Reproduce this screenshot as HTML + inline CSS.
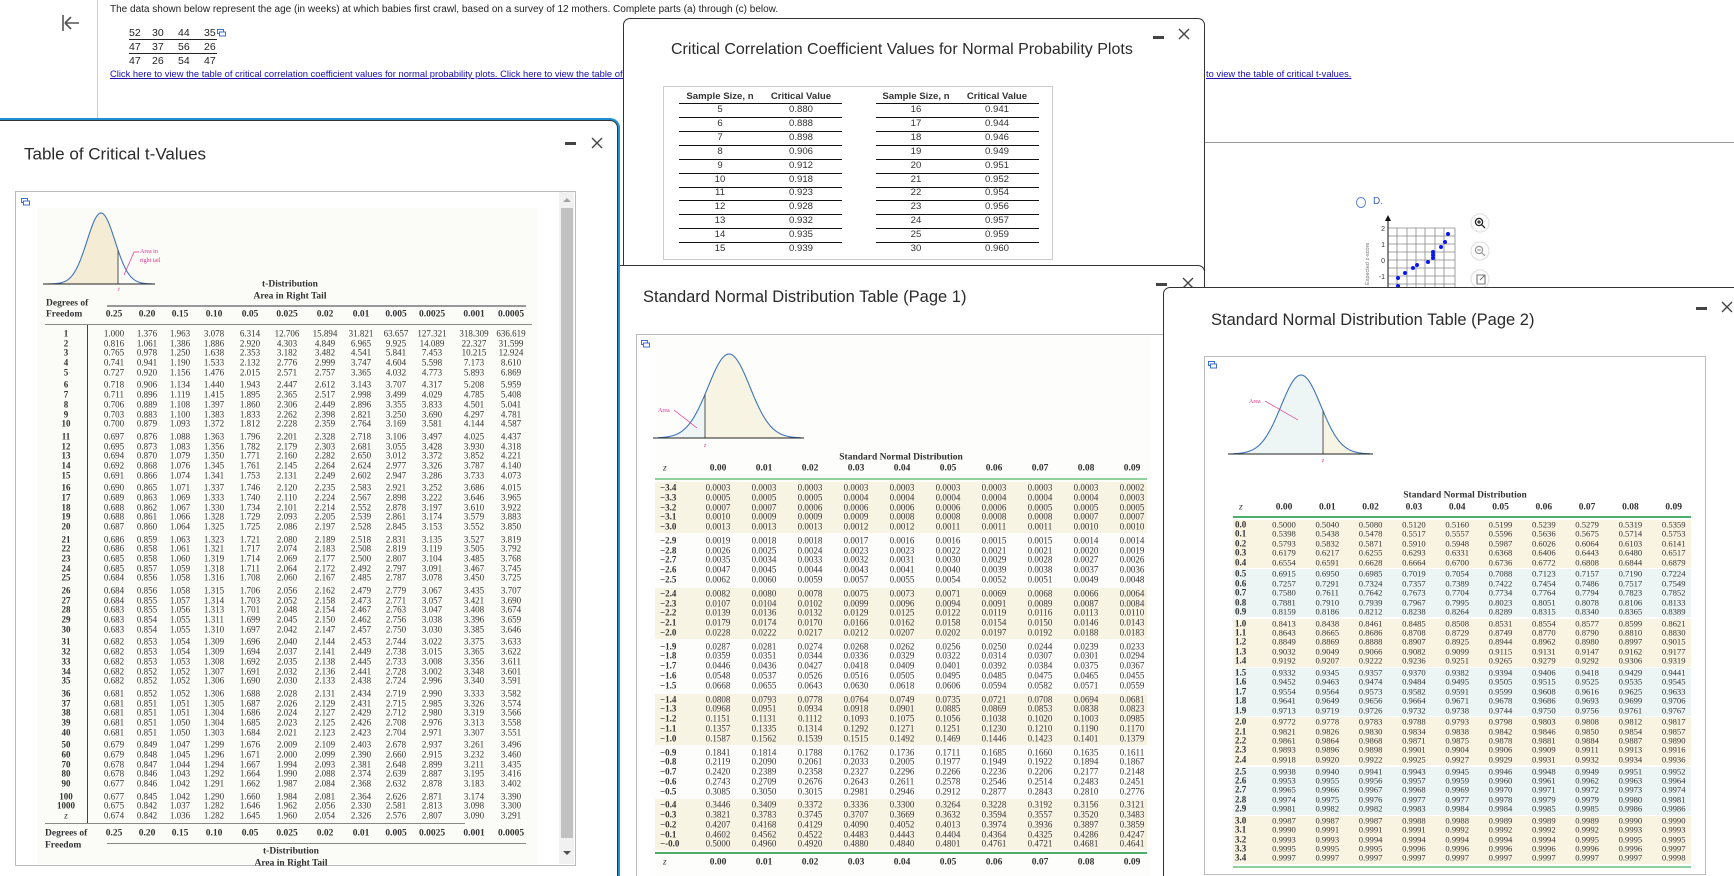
<!DOCTYPE html>
<html><head><meta charset="utf-8">
<style>
html,body{margin:0;padding:0;width:1734px;height:876px;overflow:hidden}
body{position:relative;background:#fff;font-family:"Liberation Sans",Arial,sans-serif;color:#222}
.abs{position:absolute}
.win{position:absolute;left:0;top:0;width:1734px;height:876px;overflow:hidden;pointer-events:none}
.t{position:absolute;transform:translate(-50%,-50%);white-space:nowrap;line-height:1}
.l{position:absolute;transform:translate(0,-50%);white-space:nowrap;line-height:1}
.ser{font-family:"Liberation Serif","Times New Roman",serif;font-size:9px;color:#333}
.b{font-weight:bold}
.ttl{position:absolute;font-size:16.5px;color:#2b2b2b;white-space:nowrap;line-height:1;transform:translate(0,-50%)}
.mn{position:absolute;width:11px;height:3px;background:#444}
.link{color:#1a0dab;text-decoration:underline;font-size:9.4px;position:absolute;white-space:nowrap}
.cc{font-size:9.6px;color:#333}
</style></head><body>

<!-- background page -->
<div class="abs" style="left:97px;top:0;width:1px;height:120px;background:#ccc"></div>
<svg class="abs" style="left:61px;top:13px" width="20" height="20" viewBox="0 0 20 20"><path d="M2 2V18M4 10H18M4 10L10 4M4 10L10 16" stroke="#555" stroke-width="1.6" fill="none"/></svg>
<div class="abs" style="left:110px;top:4px;font-size:10px;white-space:nowrap;color:#222">The data shown below represent the age (in weeks) at which babies first crawl, based on a survey of 12 mothers. Complete parts (a) through (c) below.</div>
<div class="abs" style="left:129px;top:26px;font-size:10.5px;line-height:14px;color:#222">
<div style="position:relative;width:90px;height:14px"><span class="abs" style="left:0">52</span><span class="abs" style="left:23px">30</span><span class="abs" style="left:49px">44</span><span class="abs" style="left:75px">35</span></div>
<div style="position:relative;width:88px;height:14px;border-top:1px solid #222;margin-top:-1px"><span class="abs" style="left:0">47</span><span class="abs" style="left:23px">37</span><span class="abs" style="left:49px">56</span><span class="abs" style="left:75px">26</span></div>
<div style="position:relative;width:88px;height:14px;border-top:1px solid #222;margin-top:-1px"><span class="abs" style="left:0">47</span><span class="abs" style="left:23px">26</span><span class="abs" style="left:49px">54</span><span class="abs" style="left:75px">47</span></div>
</div>
<svg class="abs" style="left:217px;top:29px" width="9" height="8"><rect x="0.5" y="0.5" width="6" height="4" fill="#fff" stroke="#3b6fd0"/><rect x="2.5" y="3" width="6" height="4" fill="#fff" stroke="#3b6fd0"/></svg>
<div class="link" style="left:110px;top:68px">Click here to view the table of critical correlation coefficient values for normal probability plots. Click here to view the table of critical t-values.</div>
<div class="link" style="left:1206px;top:68px;background:#fff">to view the table of critical t-values.</div>
<div class="abs" style="left:1204px;top:142px;width:530px;height:1px;background:#999"></div>
<div class="abs" style="left:1356px;top:197px;width:8px;height:9px;border:1px solid #5b86d6;border-radius:50%"></div>
<div class="abs" style="left:1373px;top:196px;font-size:10px;color:#3a5fc8">D.</div>
<svg class="abs" style="left:1360px;top:210px" width="140" height="80" viewBox="1360 210 140 80">
 <g stroke="#888" stroke-width="0.8">
  <line x1="1397" y1="228" x2="1397" y2="290"/><line x1="1407" y1="228" x2="1407" y2="290"/><line x1="1416" y1="228" x2="1416" y2="290"/><line x1="1425" y1="228" x2="1425" y2="290"/><line x1="1435" y1="228" x2="1435" y2="290"/><line x1="1444" y1="228" x2="1444" y2="290"/><line x1="1455" y1="228" x2="1455" y2="290"/>
  <line x1="1388" y1="228" x2="1455" y2="228"/><line x1="1388" y1="236" x2="1455" y2="236"/><line x1="1388" y1="244" x2="1455" y2="244"/><line x1="1388" y1="252" x2="1455" y2="252"/><line x1="1388" y1="260" x2="1455" y2="260"/><line x1="1388" y1="268" x2="1455" y2="268"/><line x1="1388" y1="276" x2="1455" y2="276"/><line x1="1388" y1="284" x2="1455" y2="284"/>
 </g>
 <line x1="1388" y1="216" x2="1388" y2="290" stroke="#111" stroke-width="1"/>
 <path d="M1385 221L1388 215L1391 221Z" fill="#111"/>
 <g fill="#0a18f0"><circle cx="1398" cy="278" r="2"/><circle cx="1398" cy="286" r="2"/><circle cx="1405" cy="273" r="2"/><circle cx="1413" cy="268" r="2"/><circle cx="1417" cy="265" r="2"/><circle cx="1428" cy="262" r="2"/><circle cx="1433" cy="252" r="2"/><circle cx="1433" cy="255" r="2"/><circle cx="1433" cy="258" r="2"/><circle cx="1441" cy="247" r="2"/><circle cx="1445" cy="242" r="2"/><circle cx="1448" cy="234" r="2"/></g>
 <g font-size="7" fill="#333" font-family="Liberation Sans" text-anchor="end"><text x="1385" y="231">2</text><text x="1385" y="247">1</text><text x="1385" y="263">0</text><text x="1385" y="279">-1</text></g>
 <text x="1369" y="285" font-size="5.5" fill="#777" font-family="Liberation Sans" transform="rotate(-90 1369 285)">Expected z-score</text>
</svg>
<svg class="abs" style="left:1468px;top:211px" width="26" height="80" viewBox="0 0 26 80">
 <g fill="#fff" stroke="#ddd"><circle cx="12" cy="12" r="9"/><circle cx="12" cy="40" r="9"/><circle cx="12" cy="68" r="9"/></g>
 <g fill="none" stroke="#222" stroke-width="1.3"><circle cx="11" cy="11" r="3.6"/><path d="M13.6 13.6L17 17M9.2 11H12.8M11 9.2V12.8"/></g>
 <g fill="none" stroke="#999" stroke-width="1.2"><circle cx="11" cy="39" r="3.6"/><path d="M13.6 41.6L17 45M9.2 39H12.8"/></g>
 <g fill="none" stroke="#777" stroke-width="1.1"><path d="M14 64H9V73H17V68M13 64H17V68M17 64L12 69"/></g>
</svg>

<!-- Correlation window -->
<div class="win" id="wc">
 <div class="abs" style="left:623px;top:18px;height:260px;background:#fff;border:1px solid #333;border-radius:7px 7px 0 0;box-sizing:border-box;width:582px"></div>
 <div class="ttl" style="left:671px;top:50px;font-size:16px">Critical Correlation Coefficient Values for Normal Probability Plots</div>
 <div class="mn" style="left:1153px;top:36px"></div>
 <svg class="abs" style="left:1178px;top:28px" width="12" height="12"><path d="M1 1L11 11M11 1L1 11" stroke="#444" stroke-width="1.4"/></svg>
 <div class="abs" style="left:663px;top:86px;width:390px;height:174px;border:1px solid #ccc;box-sizing:border-box"></div>
 <div id="cct"></div>
</div>

<!-- Page 1 window -->
<div class="win" id="w1">
 <div class="abs" style="left:560px;top:265px;width:645px;height:640px;background:#fff;border:1px solid #333;border-radius:0 7px 0 0;box-sizing:border-box"></div>
 <div class="ttl" style="left:643px;top:297px">Standard Normal Distribution Table (Page 1)</div>
 <div class="mn" style="left:1156px;top:283px"></div>
 <svg class="abs" style="left:1182px;top:277px" width="12" height="12"><path d="M1 1L11 11M11 1L1 11" stroke="#444" stroke-width="1.4"/></svg>
 <div class="abs" style="left:636px;top:334px;width:600px;height:560px;border:1px solid #bbb;box-sizing:border-box"></div>
 <div class="abs" style="left:651px;top:336px;width:500px;height:540px;background:#fdfdfb"></div>
 <svg class="abs" style="left:641px;top:340px" width="10" height="9"><rect x="0.5" y="0.5" width="6" height="4" fill="#fff" stroke="#3b6fd0"/><rect x="2.5" y="3" width="6" height="4" fill="#fff" stroke="#3b6fd0"/></svg>
 <div id="p1"></div>
</div>

<!-- t-values window -->
<div class="win" id="wt">
 <div class="abs" style="left:-10px;top:120px;width:628px;height:780px;background:#fff;border:1px solid #333;border-radius:0 8px 0 0;box-sizing:border-box;box-shadow:0 0 0 2px #1e8fd5"></div>
 <div class="ttl" style="left:24px;top:154px;font-size:17px">Table of Critical t-Values</div>
 <div class="mn" style="left:565px;top:142px"></div>
 <svg class="abs" style="left:591px;top:137px" width="12" height="12"><path d="M1 1L11 11M11 1L1 11" stroke="#444" stroke-width="1.4"/></svg>
 <div class="abs" style="left:15px;top:191px;width:561px;height:675px;border:1px solid #bbb;box-sizing:border-box;background:#fff"></div>
 <div class="abs" style="left:37px;top:208px;width:500px;height:656px;background:#fbfbf8"></div>
 <svg class="abs" style="left:21px;top:198px" width="10" height="9"><rect x="0.5" y="0.5" width="6" height="4" fill="#fff" stroke="#3b6fd0"/><rect x="2.5" y="3" width="6" height="4" fill="#fff" stroke="#3b6fd0"/></svg>
 <div class="abs" style="left:559px;top:192px;width:15px;height:672px;background:#f1f1f1"></div>
 <div class="abs" style="left:561px;top:208px;width:12px;height:630px;background:#c1c1c1"></div>
 <svg class="abs" style="left:561px;top:196px" width="12" height="8"><path d="M2 6L6 2L10 6Z" fill="#a3a3a3"/></svg>
 <svg class="abs" style="left:561px;top:849px" width="12" height="8"><path d="M2 2L6 6L10 2Z" fill="#505050"/></svg>
 <div id="tt"></div>
</div>

<!-- Page 2 window -->
<div class="win" id="w2">
 <div class="abs" style="left:1163px;top:287px;width:600px;height:620px;background:#fff;border:1px solid #333;border-radius:7px 0 0 0;box-sizing:border-box"></div>
 <div class="ttl" style="left:1211px;top:320px">Standard Normal Distribution Table (Page 2)</div>
 <div class="mn" style="left:1696px;top:307px"></div>
 <svg class="abs" style="left:1721px;top:301px" width="12" height="12"><path d="M1 1L11 11M11 1L1 11" stroke="#444" stroke-width="1.4"/></svg>
 <div class="abs" style="left:1204px;top:356px;width:502px;height:519px;border:1px solid #bbb;box-sizing:border-box"></div>
 <svg class="abs" style="left:1208px;top:361px" width="10" height="9"><rect x="0.5" y="0.5" width="6" height="4" fill="#fff" stroke="#3b6fd0"/><rect x="2.5" y="3" width="6" height="4" fill="#fff" stroke="#3b6fd0"/></svg>
 <div id="p2"></div>
</div>

<script>
function T(p,x,y,s,cls,st){var e=document.createElement('div');e.className=cls||'t';e.style.left=x+'px';e.style.top=y+'px';e.textContent=s;if(st)e.style.cssText+=st;p.appendChild(e);return e;}
function R(p,x,y,w,h,c){var e=document.createElement('div');e.className='abs';e.style.cssText='left:'+x+'px;top:'+y+'px;width:'+w+'px;height:'+h+'px;background:'+c;p.appendChild(e);}
var NS='http://www.w3.org/2000/svg';
function curve(p,x0,x1,mu,s,h,base,cut,lf,rf,label,lx,ly,ax,ay){
 var sv=document.createElementNS(NS,'svg');sv.setAttribute('width',1734);sv.setAttribute('height',876);sv.style.cssText='position:absolute;left:0;top:0';
 function y(x){return base-h*Math.exp(-0.5*Math.pow((x-mu)/s,2));}
 var L='M'+x0+' '+base,Rr='M'+cut+' '+base,C='';
 for(var x=x0;x<=x1;x+=0.5){var yy=y(x).toFixed(2);C+=(C?'L':'M')+x+' '+yy;if(x<=cut)L+='L'+x+' '+yy;else Rr+='L'+x+' '+yy;}
 L+='L'+cut+' '+y(cut).toFixed(2)+'L'+cut+' '+base+'Z';Rr+='L'+x1+' '+base+'Z';
 sv.innerHTML='<path d="'+L+'" fill="'+lf+'"/><path d="'+Rr+'" fill="'+rf+'"/><path d="'+C+'" fill="none" stroke="#3f74bd" stroke-width="1.1"/><line x1="'+cut+'" y1="'+y(cut)+'" x2="'+cut+'" y2="'+base+'" stroke="#555" stroke-width="1"/><line x1="'+(x0-5)+'" y1="'+base+'" x2="'+(x1+3)+'" y2="'+base+'" stroke="#222" stroke-width="1"/>'+
 (label?'<text x="'+lx+'" y="'+ly+'" font-size="6" fill="#e0308a" font-family="Liberation Serif">'+label+'</text><line x1="'+(lx+16)+'" y1="'+(ly-2)+'" x2="'+ax+'" y2="'+ay+'" stroke="#e0308a" stroke-width="0.7"/>':'');
 p.appendChild(sv);
}
// ---------- t table ----------
var tt=document.getElementById('tt');
curve(tt,48,152,101,14,71,284,118,'#f5ecd6','#fbfbf8');
T(tt,140,252,'Area in','l','font:6px "Liberation Serif";color:#e0308a');
T(tt,140,261,'right tail','l','font:6px "Liberation Serif";color:#e0308a');
var s2=document.createElementNS(NS,'svg');s2.setAttribute('width',1734);s2.setAttribute('height',876);s2.style.cssText='position:absolute;left:0;top:0';
s2.innerHTML='<path d="M139 252H134L124 275" stroke="#e0308a" stroke-width="0.7" fill="none"/>';tt.appendChild(s2);
T(tt,119,290,'t','t','font:italic 6px "Liberation Serif";color:#e0308a');
T(tt,290,285,'t-Distribution','t ser b','font-size:9.5px');
T(tt,290,297,'Area in Right Tail','t ser b','font-size:9.5px');
var tx=[114,147,180,214,250,287,325,361,396,432,474,511];
var th=['0.25','0.20','0.15','0.10','0.05','0.025','0.02','0.01','0.005','0.0025','0.001','0.0005'];
T(tt,46,304,'Degrees of','l ser b','font-size:9.5px');T(tt,46,315,'Freedom','l ser b','font-size:9.5px');
R(tt,107,305,419,2,'#999');R(tt,45,324,487,1,'#888');R(tt,87,325,1,499,'#444');R(tt,45,823,420,1,'#888');
th.forEach(function(h,i){T(tt,tx[i],315,h,'t ser b','font-size:9.5px');T(tt,tx[i],834,h,'t ser b','font-size:9.5px');});
T(tt,45,834,'Degrees of','l ser b','font-size:9.5px');T(tt,45,846,'Freedom','l ser b','font-size:9.5px');
R(tt,107,843,419,1,'#888');
T(tt,291,852,'t-Distribution','t ser b','font-size:9.5px');T(tt,291,864,'Area in Right Tail','t ser b','font-size:9.5px');
var TD=`1 1.000 1.376 1.963 3.078 6.314 12.706 15.894 31.821 63.657 127.321 318.309 636.619
2 0.816 1.061 1.386 1.886 2.920 4.303 4.849 6.965 9.925 14.089 22.327 31.599
3 0.765 0.978 1.250 1.638 2.353 3.182 3.482 4.541 5.841 7.453 10.215 12.924
4 0.741 0.941 1.190 1.533 2.132 2.776 2.999 3.747 4.604 5.598 7.173 8.610
5 0.727 0.920 1.156 1.476 2.015 2.571 2.757 3.365 4.032 4.773 5.893 6.869
6 0.718 0.906 1.134 1.440 1.943 2.447 2.612 3.143 3.707 4.317 5.208 5.959
7 0.711 0.896 1.119 1.415 1.895 2.365 2.517 2.998 3.499 4.029 4.785 5.408
8 0.706 0.889 1.108 1.397 1.860 2.306 2.449 2.896 3.355 3.833 4.501 5.041
9 0.703 0.883 1.100 1.383 1.833 2.262 2.398 2.821 3.250 3.690 4.297 4.781
10 0.700 0.879 1.093 1.372 1.812 2.228 2.359 2.764 3.169 3.581 4.144 4.587
11 0.697 0.876 1.088 1.363 1.796 2.201 2.328 2.718 3.106 3.497 4.025 4.437
12 0.695 0.873 1.083 1.356 1.782 2.179 2.303 2.681 3.055 3.428 3.930 4.318
13 0.694 0.870 1.079 1.350 1.771 2.160 2.282 2.650 3.012 3.372 3.852 4.221
14 0.692 0.868 1.076 1.345 1.761 2.145 2.264 2.624 2.977 3.326 3.787 4.140
15 0.691 0.866 1.074 1.341 1.753 2.131 2.249 2.602 2.947 3.286 3.733 4.073
16 0.690 0.865 1.071 1.337 1.746 2.120 2.235 2.583 2.921 3.252 3.686 4.015
17 0.689 0.863 1.069 1.333 1.740 2.110 2.224 2.567 2.898 3.222 3.646 3.965
18 0.688 0.862 1.067 1.330 1.734 2.101 2.214 2.552 2.878 3.197 3.610 3.922
19 0.688 0.861 1.066 1.328 1.729 2.093 2.205 2.539 2.861 3.174 3.579 3.883
20 0.687 0.860 1.064 1.325 1.725 2.086 2.197 2.528 2.845 3.153 3.552 3.850
21 0.686 0.859 1.063 1.323 1.721 2.080 2.189 2.518 2.831 3.135 3.527 3.819
22 0.686 0.858 1.061 1.321 1.717 2.074 2.183 2.508 2.819 3.119 3.505 3.792
23 0.685 0.858 1.060 1.319 1.714 2.069 2.177 2.500 2.807 3.104 3.485 3.768
24 0.685 0.857 1.059 1.318 1.711 2.064 2.172 2.492 2.797 3.091 3.467 3.745
25 0.684 0.856 1.058 1.316 1.708 2.060 2.167 2.485 2.787 3.078 3.450 3.725
26 0.684 0.856 1.058 1.315 1.706 2.056 2.162 2.479 2.779 3.067 3.435 3.707
27 0.684 0.855 1.057 1.314 1.703 2.052 2.158 2.473 2.771 3.057 3.421 3.690
28 0.683 0.855 1.056 1.313 1.701 2.048 2.154 2.467 2.763 3.047 3.408 3.674
29 0.683 0.854 1.055 1.311 1.699 2.045 2.150 2.462 2.756 3.038 3.396 3.659
30 0.683 0.854 1.055 1.310 1.697 2.042 2.147 2.457 2.750 3.030 3.385 3.646
31 0.682 0.853 1.054 1.309 1.696 2.040 2.144 2.453 2.744 3.022 3.375 3.633
32 0.682 0.853 1.054 1.309 1.694 2.037 2.141 2.449 2.738 3.015 3.365 3.622
33 0.682 0.853 1.053 1.308 1.692 2.035 2.138 2.445 2.733 3.008 3.356 3.611
34 0.682 0.852 1.052 1.307 1.691 2.032 2.136 2.441 2.728 3.002 3.348 3.601
35 0.682 0.852 1.052 1.306 1.690 2.030 2.133 2.438 2.724 2.996 3.340 3.591
36 0.681 0.852 1.052 1.306 1.688 2.028 2.131 2.434 2.719 2.990 3.333 3.582
37 0.681 0.851 1.051 1.305 1.687 2.026 2.129 2.431 2.715 2.985 3.326 3.574
38 0.681 0.851 1.051 1.304 1.686 2.024 2.127 2.429 2.712 2.980 3.319 3.566
39 0.681 0.851 1.050 1.304 1.685 2.023 2.125 2.426 2.708 2.976 3.313 3.558
40 0.681 0.851 1.050 1.303 1.684 2.021 2.123 2.423 2.704 2.971 3.307 3.551
50 0.679 0.849 1.047 1.299 1.676 2.009 2.109 2.403 2.678 2.937 3.261 3.496
60 0.679 0.848 1.045 1.296 1.671 2.000 2.099 2.390 2.660 2.915 3.232 3.460
70 0.678 0.847 1.044 1.294 1.667 1.994 2.093 2.381 2.648 2.899 3.211 3.435
80 0.678 0.846 1.043 1.292 1.664 1.990 2.088 2.374 2.639 2.887 3.195 3.416
90 0.677 0.846 1.042 1.291 1.662 1.987 2.084 2.368 2.632 2.878 3.183 3.402
100 0.677 0.845 1.042 1.290 1.660 1.984 2.081 2.364 2.626 2.871 3.174 3.390
1000 0.675 0.842 1.037 1.282 1.646 1.962 2.056 2.330 2.581 2.813 3.098 3.300
z 0.674 0.842 1.036 1.282 1.645 1.960 2.054 2.326 2.576 2.807 3.090 3.291`.split('\n');
TD.forEach(function(line,i){var a=line.split(' ');var g=Math.floor(i/5),k=i%5;var y=334+g*51.4+k*9.7;
 T(tt,66,y,a[0],'t ser b',a[0]=='z'?'font-weight:normal;font-style:italic':'');
 for(var j=1;j<13;j++)T(tt,tx[j-1],y,a[j],'t ser');});

// ---------- correlation table ----------
var cc=document.getElementById('cct');
T(cc,720,97,'Sample Size, n','t cc b');T(cc,801,97,'Critical Value','t cc b');
T(cc,916,97,'Sample Size, n','t cc b');T(cc,997,97,'Critical Value','t cc b');
R(cc,679,103,163,1,'#111');R(cc,876,103,163,1,'#111');
var cl=['0.880','0.888','0.898','0.906','0.912','0.918','0.923','0.928','0.932','0.935','0.939'];
var cr=['0.941','0.944','0.946','0.949','0.951','0.952','0.954','0.956','0.957','0.959','0.960'];
var nr=[16,17,18,19,20,21,22,23,24,25,30];
for(var i=0;i<11;i++){var y=110+i*13.9;
 T(cc,720,y,String(5+i),'t cc');T(cc,801,y,cl[i],'t cc');T(cc,916,y,String(nr[i]),'t cc');T(cc,997,y,cr[i],'t cc');
 if(i<10){R(cc,679,Math.round(y+7),163,1,'#111');R(cc,876,Math.round(y+7),163,1,'#111');}}

// ---------- Phi ----------
function Phi(x){var n=400,b=Math.abs(x),h=b/n,s=0;for(var i=0;i<=n;i++){var t=i*h,f=Math.exp(-t*t/2);s+=(i==0||i==n)?f:(i%2?4*f:2*f);}var I=s*h/3/Math.sqrt(2*Math.PI);return x>=0?0.5+I:0.5-I;}
var cols=['0.00','0.01','0.02','0.03','0.04','0.05','0.06','0.07','0.08','0.09'];

// ---------- page 1 ----------
var p1=document.getElementById('p1');
for(var g=0;g<7;g+=2)R(p1,655,Math.round(488+g*52.9-6),492,51,'#f8f4e3');
curve(p1,658,801,729,21,84,438,705,'#eef5f6','#f8f4e3','Area',658,412,697,428);
T(p1,705,446,'z','t','font:italic 6px "Liberation Serif";color:#e0308a');
T(p1,901,458,'Standard Normal Distribution','t ser b','font-size:9.5px');
T(p1,663,469,'z','l ser','font-style:italic;font-size:9.5px');T(p1,663,863,'z','l ser','font-style:italic;font-size:9.5px');
R(p1,655,478,492,2,'#8fd19e');R(p1,655,852,492,2,'#4caf6a');
cols.forEach(function(c,i){T(p1,718+46*i,469,c,'t ser b','font-size:9.5px');T(p1,718+46*i,863,c,'t ser b','font-size:9.5px');});
for(var r=0;r<35;r++){var zz=3.4-r*0.1;var g=Math.floor(r/5),k=r%5;var y=488+g*52.9+k*9.75;
 T(p1,660,y,'\u2212'+zz.toFixed(1),'l ser b');
 for(var c=0;c<10;c++){T(p1,718+46*c,y,Phi(-(zz+c/100)).toFixed(4),'t ser');}}

// ---------- page 2 ----------
var p2=document.getElementById('p2');
for(var g=0;g<7;g++)R(p2,1233,Math.round(525+g*49.3-5),458,48,g%2?'#ecf4f4':'#f8f4e1');
curve(p2,1233,1370,1301,20,79,454,1323,'#eef5f5','#f8f4e3','Area',1249,403,1298,420);
T(p2,1323,461,'z','t','font:italic 6px "Liberation Serif";color:#e0308a');
T(p2,1465,496,'Standard Normal Distribution','t ser b','font-size:9.5px');
T(p2,1239,508,'z','l ser','font-style:italic;font-size:9.5px');
R(p2,1233,516,458,2,'#4caf6a');R(p2,1233,866,458,2,'#8fd19e');
cols.forEach(function(c,i){T(p2,1284+43.3*i,508,c,'t ser b','font-size:9.5px');});
for(var r=0;r<35;r++){var zz=r*0.1;var g=Math.floor(r/5),k=r%5;var y=525+g*49.3+k*9.4;
 T(p2,1235,y,zz.toFixed(1),'l ser b');
 for(var c=0;c<10;c++){T(p2,1284+43.3*c,y,Phi(zz+c/100).toFixed(4),'t ser','font-size:8.6px');}}
</script>
</body></html>
